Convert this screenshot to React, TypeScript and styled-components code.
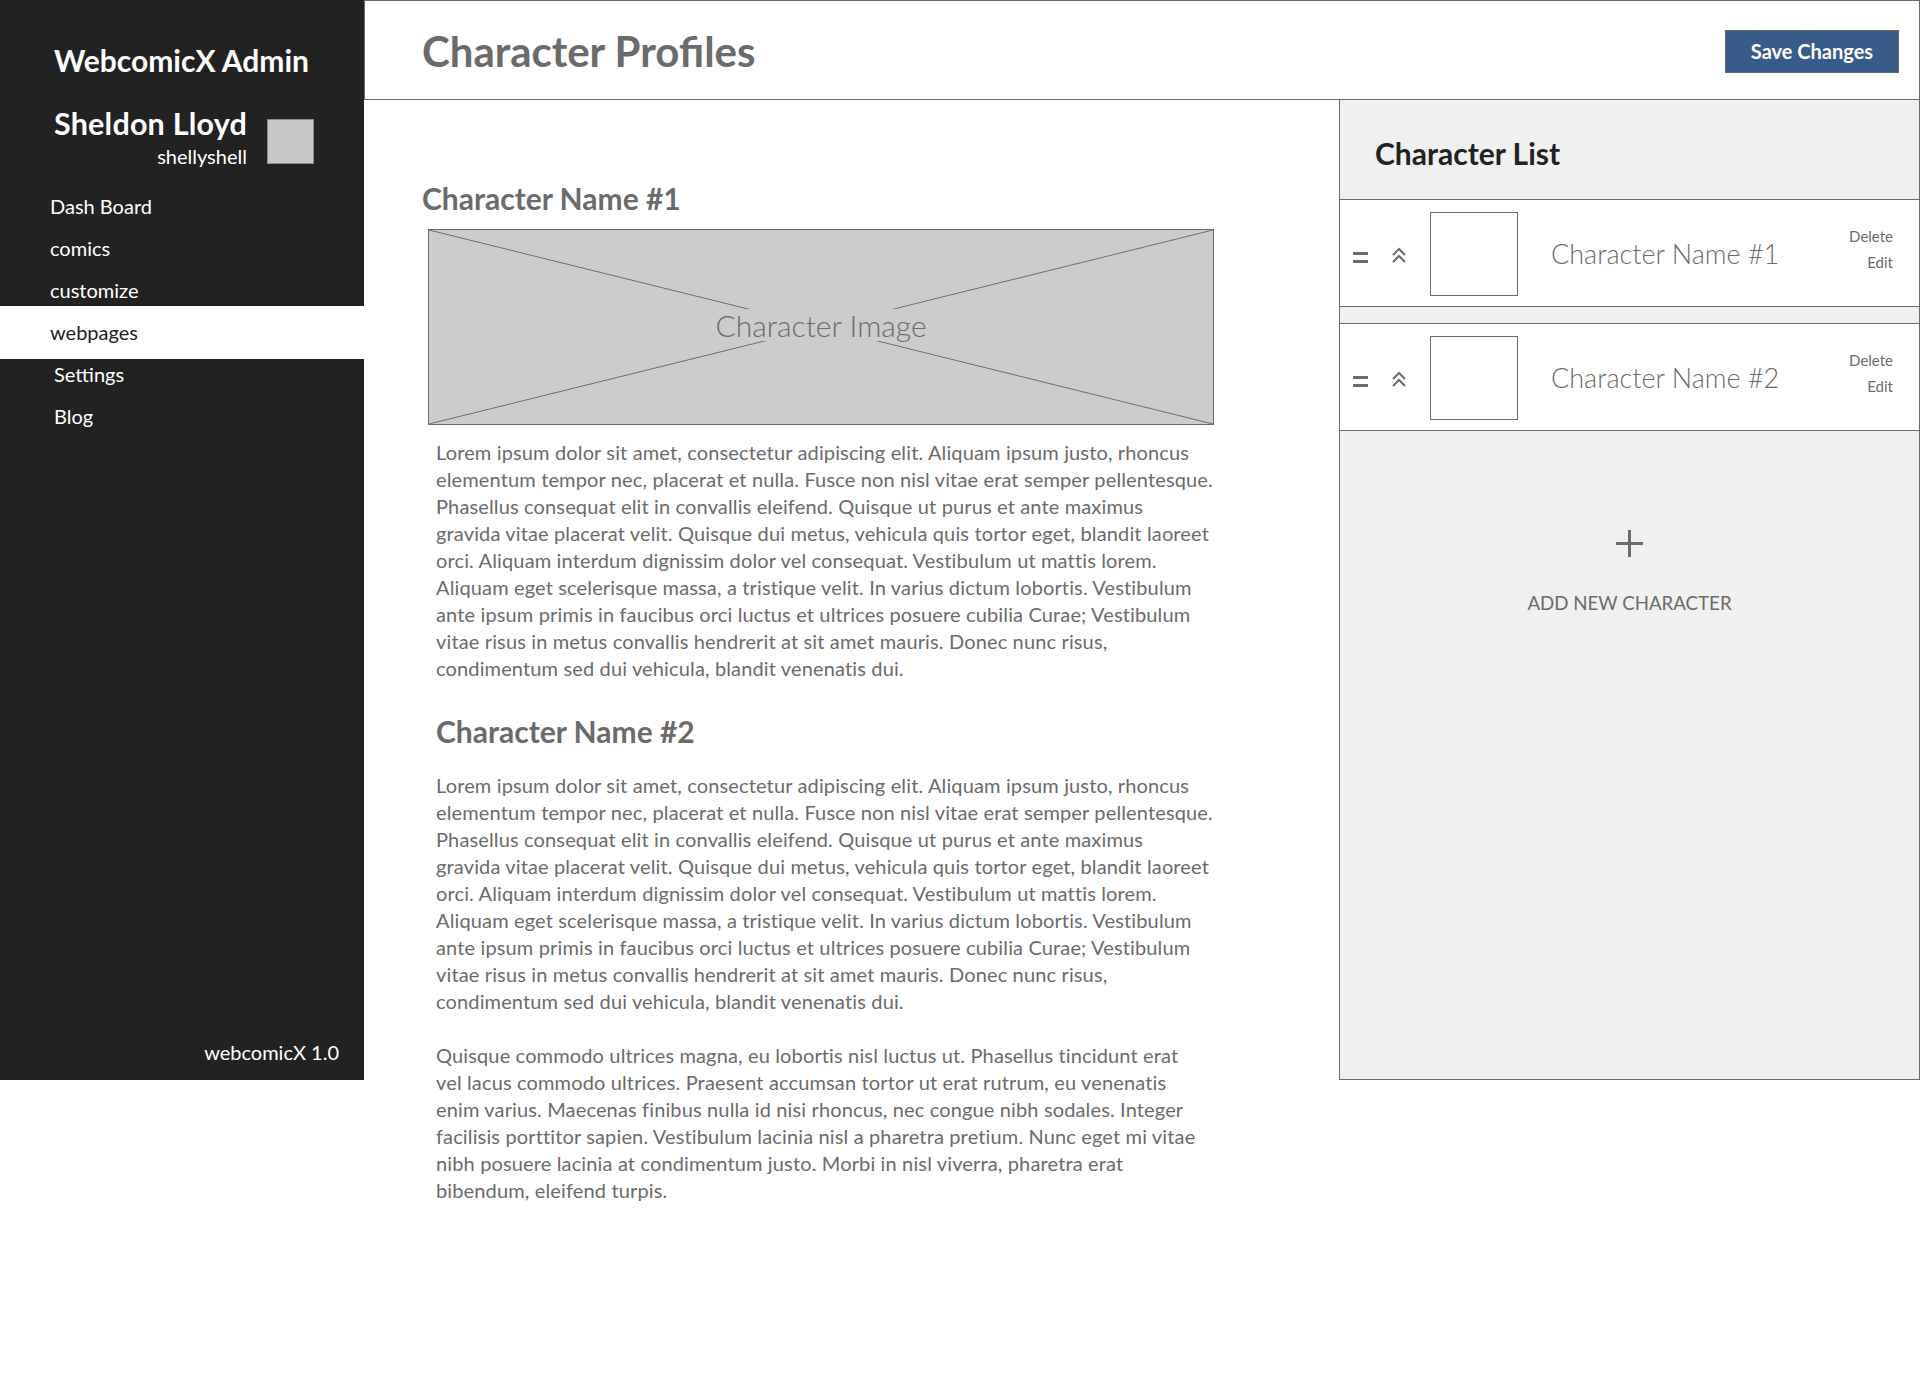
import React from 'react';
import styled, { createGlobalStyle } from 'styled-components';

const GlobalStyle = createGlobalStyle`
  body {
    margin: 0;
    background: #ffffff;
    font-family: Lato, "Liberation Sans", sans-serif;
  }
`;

const Page = styled.div`
  display: flex;
  align-items: flex-start;
  width: 1920px;
  min-height: 1380px;
  background: #ffffff;
  font-family: Lato, "Liberation Sans", sans-serif;
`;

// Left navigation column
const Sidebar = styled.aside`
  width: 364px;
  height: 1080px;
  flex-shrink: 0;
  display: flex;
  flex-direction: column;
  background: #222222;
  color: #ffffff;
  padding-top: 42px;
  box-sizing: border-box;
`;

const AppTitle = styled.h1`
  margin: 0 0 27px 54px;
  font-size: 30px;
  line-height: 36px;
  font-weight: 700;
`;

const UserRow = styled.div`
  display: flex;
  align-items: flex-end;
  gap: 20px;
  margin-left: 54px;
`;

const UserText = styled.div`
  display: flex;
  flex-direction: column;
  align-items: flex-end;
`;

const UserName = styled.div`
  font-size: 30.5px;
  line-height: 36px;
  font-weight: 700;
  letter-spacing: 0.2px;
`;

const UserHandle = styled.div`
  margin-top: 3px;
  font-size: 20px;
  line-height: 24px;
`;

const Avatar = styled.div`
  width: 47px;
  height: 45px;
  box-sizing: border-box;
  margin-bottom: 4px;
  background: #c8c8c8;
  border: 1px solid #8a8a8a;
`;

const NavList = styled.nav`
  display: flex;
  flex-direction: column;
  margin-top: 17px;
`;

const NavItem = styled.a<{ $active?: boolean; $indent: number }>`
  display: block;
  height: ${(p) => (p.$active ? 53 : 42)}px;
  line-height: ${(p) => (p.$active ? 53 : 42)}px;
  margin: ${(p) => (p.$active ? '-5px 0 -6px' : '0')};
  padding-left: ${(p) => p.$indent}px;
  font-size: 20px;
  color: ${(p) => (p.$active ? '#222222' : '#ffffff')};
  background: ${(p) => (p.$active ? '#ffffff' : 'transparent')};
  position: relative;
  text-decoration: none;
`;

const Version = styled.div`
  margin-top: auto;
  padding: 0 25px 16px 0;
  text-align: right;
  font-size: 20px;
  line-height: 24px;
`;

const Main = styled.div`
  flex: 1;
  display: flex;
  flex-direction: column;
`;

const TopBar = styled.header`
  height: 100px;
  box-sizing: border-box;
  border: 1px solid #6b6b6b;
  display: flex;
  align-items: center;
  justify-content: space-between;
  padding: 2px 20px 0 57px;
`;

const PageTitle = styled.h2`
  margin: 0;
  font-size: 42px;
  line-height: 52px;
  font-weight: 700;
  color: #6b6b6b;
`;

const SaveButton = styled.button`
  width: 174px;
  height: 43px;
  box-sizing: border-box;
  background: #385c89;
  border: 1px solid #666666;
  color: #ffffff;
  font-family: inherit;
  font-size: 20px;
  font-weight: 700;
  cursor: pointer;
`;

const Body = styled.div`
  display: flex;
  align-items: flex-start;
`;

const Content = styled.section`
  flex: 1;
  padding: 80px 0 60px 58px;
`;

const SectionHeading = styled.h3<{ $inset?: boolean }>`
  margin: ${(p) => (p.$inset ? '31px 0 23px 14px' : '0 0 13px 0')};
  font-size: 30px;
  line-height: 36px;
  font-weight: 700;
  color: #6b6b6b;
`;

const ImageBox = styled.div`
  position: relative;
  width: 786px;
  height: 196px;
  margin-left: 6px;
  box-sizing: border-box;
  background: #cccccc;
  border: 1px solid #6b6b6b;
  display: flex;
  align-items: center;
  justify-content: center;
`;

const Cross = styled.svg`
  position: absolute;
  inset: 0;
  width: 100%;
  height: 100%;
`;

const ImageLabel = styled.span`
  position: relative;
  background: #cccccc;
  font-size: 30px;
  line-height: 32px;
  font-weight: 300;
  color: #6b6b6b;
  margin-top: -4px;
`;

const Paragraph = styled.p<{ $gap: number }>`
  width: 790px;
  margin: ${(p) => p.$gap}px 0 0 14px;
  font-size: 20px;
  line-height: 27px;
  letter-spacing: 0.14px;
  color: #6b6b6b;
`;

const Line = styled.span`
  display: block;
  white-space: nowrap;
`;

// Right column with the sortable character list
const ListPanel = styled.aside`
  width: 581px;
  height: 980px;
  flex-shrink: 0;
  box-sizing: border-box;
  background: #f0f0f0;
  border: 1px solid #6b6b6b;
  border-top: none;
  display: flex;
  flex-direction: column;
`;

const PanelTitle = styled.h3`
  margin: 0;
  padding: 35px 0 28px 35px;
  font-size: 30px;
  line-height: 36px;
  font-weight: 700;
  color: #222222;
`;

const Rows = styled.div`
  display: flex;
  flex-direction: column;
  gap: 16px;
`;

const Row = styled.div`
  height: 108px;
  box-sizing: border-box;
  background: #ffffff;
  border-top: 1px solid #6b6b6b;
  border-bottom: 1px solid #6b6b6b;
  display: flex;
  align-items: center;
  padding: 0 26px 0 13px;
`;

const Handle = styled.div`
  width: 15px;
  height: 11px;
  margin-top: 8px;
  border-top: 3px solid #6b6b6b;
  border-bottom: 3px solid #6b6b6b;
  box-sizing: border-box;
`;

const MoveUp = styled.svg`
  width: 16px;
  height: 17px;
  margin: 4px 0 0 23px;
`;

const Thumb = styled.div`
  width: 88px;
  height: 84px;
  box-sizing: border-box;
  margin-left: 23px;
  margin-top: 2px;
  background: #ffffff;
  border: 1px solid #6b6b6b;
`;

const RowName = styled.div`
  margin-left: 33px;
  font-size: 27px;
  font-weight: 300;
  color: #6b6b6b;
  flex: 1;
`;

const RowActions = styled.div`
  display: flex;
  flex-direction: column;
  align-items: flex-end;
  margin-top: -8px;
`;

const ActionLink = styled.a`
  font-size: 15px;
  line-height: 26px;
  font-weight: 400;
  color: #6b6b6b;
  text-decoration: none;
`;

const AddCharacter = styled.button`
  margin-top: 99px;
  display: flex;
  flex-direction: column;
  align-items: center;
  gap: 34px;
  background: none;
  border: none;
  padding: 0;
  font-family: inherit;
  cursor: pointer;
`;

const AddLabel = styled.span`
  font-size: 18.7px;
  line-height: 24px;
  color: #6b6b6b;
`;

const lorem = [
  'Lorem ipsum dolor sit amet, consectetur adipiscing elit. Aliquam ipsum justo, rhoncus',
  'elementum tempor nec, placerat et nulla. Fusce non nisl vitae erat semper pellentesque.',
  'Phasellus consequat elit in convallis eleifend. Quisque ut purus et ante maximus',
  'gravida vitae placerat velit. Quisque dui metus, vehicula quis tortor eget, blandit laoreet',
  'orci. Aliquam interdum dignissim dolor vel consequat. Vestibulum ut mattis lorem.',
  'Aliquam eget scelerisque massa, a tristique velit. In varius dictum lobortis. Vestibulum',
  'ante ipsum primis in faucibus orci luctus et ultrices posuere cubilia Curae; Vestibulum',
  'vitae risus in metus convallis hendrerit at sit amet mauris. Donec nunc risus,',
  'condimentum sed dui vehicula, blandit venenatis dui.',
];

const quisque = [
  'Quisque commodo ultrices magna, eu lobortis nisl luctus ut. Phasellus tincidunt erat',
  'vel lacus commodo ultrices. Praesent accumsan tortor ut erat rutrum, eu venenatis',
  'enim varius. Maecenas finibus nulla id nisi rhoncus, nec congue nibh sodales. Integer',
  'facilisis porttitor sapien. Vestibulum lacinia nisl a pharetra pretium. Nunc eget mi vitae',
  'nibh posuere lacinia at condimentum justo. Morbi in nisl viverra, pharetra erat',
  'bibendum, eleifend turpis.',
];

const navItems = [
  { label: 'Dash Board', indent: 50 },
  { label: 'comics', indent: 50 },
  { label: 'customize', indent: 50 },
  { label: 'webpages', indent: 50, active: true },
  { label: 'Settings', indent: 54 },
  { label: 'Blog', indent: 54 },
];

const characters = ['Character Name #1', 'Character Name #2'];

const TextBlock: React.FC<{ lines: string[]; gap: number }> = ({ lines, gap }) => (
  <Paragraph $gap={gap}>
    {lines.map((line) => (
      <Line key={line}>{line}</Line>
    ))}
  </Paragraph>
);

const App: React.FC = () => {
  return (
    <Page>
      <GlobalStyle />
      <Sidebar>
        <AppTitle>WebcomicX Admin</AppTitle>
        <UserRow>
          <UserText>
            <UserName>Sheldon Lloyd</UserName>
            <UserHandle>shellyshell</UserHandle>
          </UserText>
          <Avatar />
        </UserRow>
        <NavList>
          {navItems.map((item) => (
            <NavItem key={item.label} href="#" $active={item.active} $indent={item.indent}>
              {item.label}
            </NavItem>
          ))}
        </NavList>
        <Version>webcomicX 1.0</Version>
      </Sidebar>

      <Main>
        <TopBar>
          <PageTitle>Character Profiles</PageTitle>
          <SaveButton>Save Changes</SaveButton>
        </TopBar>

        <Body>
          <Content>
            <SectionHeading>Character Name #1</SectionHeading>
            <ImageBox>
              <Cross viewBox="0 0 100 100" preserveAspectRatio="none">
                <line x1="0" y1="0" x2="100" y2="100" stroke="#6e6e6e" strokeWidth="1" vectorEffect="non-scaling-stroke" />
                <line x1="100" y1="0" x2="0" y2="100" stroke="#6e6e6e" strokeWidth="1" vectorEffect="non-scaling-stroke" />
              </Cross>
              <ImageLabel>Character Image</ImageLabel>
            </ImageBox>
            <TextBlock lines={lorem} gap={14} />

            <SectionHeading $inset>Character Name #2</SectionHeading>
            <TextBlock lines={lorem} gap={0} />
            <TextBlock lines={quisque} gap={27} />
          </Content>

          <ListPanel>
            <PanelTitle>Character List</PanelTitle>
            <Rows>
              {characters.map((name) => (
                <Row key={name}>
                  <Handle />
                  <MoveUp viewBox="0 0 16 17">
                    <polyline points="2,8 8,2 14,8" fill="none" stroke="#6b6b6b" strokeWidth="2" />
                    <polyline points="2,15 8,9 14,15" fill="none" stroke="#6b6b6b" strokeWidth="2" />
                  </MoveUp>
                  <Thumb />
                  <RowName>{name}</RowName>
                  <RowActions>
                    <ActionLink href="#">Delete</ActionLink>
                    <ActionLink href="#">Edit</ActionLink>
                  </RowActions>
                </Row>
              ))}
            </Rows>
            <AddCharacter>
              <svg width="27" height="27" viewBox="0 0 27 27">
                <path d="M13.5 0 V27 M0 13.5 H27" stroke="#6b6b6b" strokeWidth="3" />
              </svg>
              <AddLabel>ADD NEW CHARACTER</AddLabel>
            </AddCharacter>
          </ListPanel>
        </Body>
      </Main>
    </Page>
  );
};

export default App;
